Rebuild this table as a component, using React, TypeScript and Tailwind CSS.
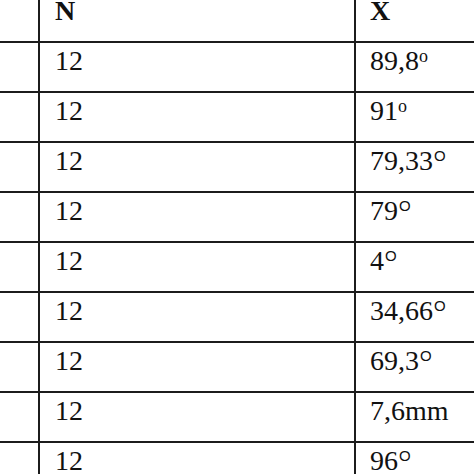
const rows: { n: string; x: string; sup?: "o" | "O" }[] = [
  { n: "12", x: "89,8", sup: "o" },
  { n: "12", x: "91", sup: "o" },
  { n: "12", x: "79,33", sup: "O" },
  { n: "12", x: "79", sup: "O" },
  { n: "12", x: "4", sup: "O" },
  { n: "12", x: "34,66", sup: "O" },
  { n: "12", x: "69,3", sup: "O" },
  { n: "12", x: "7,6mm" },
  { n: "12", x: "96", sup: "O" },
]

function Row({ a, b, sup, head }: { a: string; b: string; sup?: "o" | "O"; head?: boolean }) {
  const text = head ? "font-bold" : "font-normal"
  return (
    <div className="flex h-[50px] border-b-2 border-[#1c1c1c]">
      <div className="w-[40px] shrink-0 border-r-2 border-[#1c1c1c]" />
      <div className={`w-[316px] shrink-0 border-r-2 border-[#1c1c1c] pl-[15px] pt-[2px] leading-[32px] ${text}`}>
        {a}
      </div>
      <div className={`flex-1 pl-[14px] pt-[2px] leading-[32px] ${text}`}>
        {b}
        {sup === "o" && (
          <span className="relative top-[-8px] text-[18px] leading-none">o</span>
        )}
        {sup === "O" && (
          <span className="relative top-[-9px] ml-[1px] font-['Liberation_Sans',sans-serif] text-[15px] leading-none">
            O
          </span>
        )}
      </div>
    </div>
  )
}

export default function App() {
  return (
    <div className="h-[474px] w-[474px] overflow-hidden bg-white font-['Liberation_Serif','Times_New_Roman',serif] text-[28px] text-[#111]">
      <div className="mt-[-7px]">
        <Row a="N" b="X" head />
        {rows.map((r, i) => (
          <Row key={i} a={r.n} b={r.x} sup={r.sup} />
        ))}
      </div>
    </div>
  )
}
